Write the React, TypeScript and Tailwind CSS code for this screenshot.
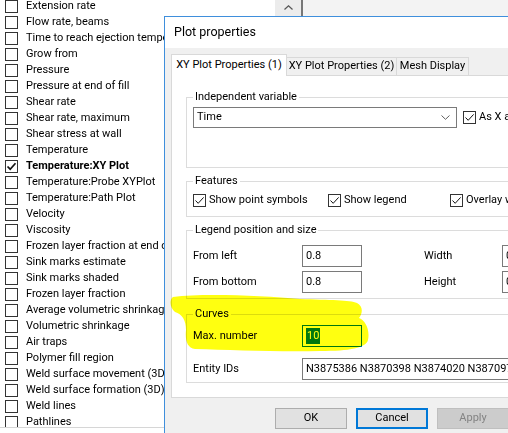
import React from "react";

const listItems = [
  "Extension rate",
  "Flow rate, beams",
  "Time to reach ejection temperature",
  "Grow from",
  "Pressure",
  "Pressure at end of fill",
  "Shear rate",
  "Shear rate, maximum",
  "Shear stress at wall",
  "Temperature",
  "Temperature:XY Plot",
  "Temperature:Probe XYPlot",
  "Temperature:Path Plot",
  "Velocity",
  "Viscosity",
  "Frozen layer fraction at end of fill",
  "Sink marks estimate",
  "Sink marks shaded",
  "Frozen layer fraction",
  "Average volumetric shrinkage",
  "Volumetric shrinkage",
  "Air traps",
  "Polymer fill region",
  "Weld surface movement (3D)",
  "Weld surface formation (3D)",
  "Weld lines",
  "Pathlines",
];

function CheckBox({ checked, bold }: { checked?: boolean; bold?: boolean }) {
  return (
    <span className="flex h-[13px] w-[13px] shrink-0 items-center justify-center border border-[#333333] bg-white">
      {checked && (
        <svg width="11" height="11" viewBox="0 0 11 11">
          <path
            d={bold ? "M1.5 5.5 L4.2 8.2 L9.5 2.2" : "M1.5 5.5 L4.2 8.3 L9.6 2.4"}
            fill="none"
            stroke="#111"
            strokeWidth={bold ? 1.7 : 1}
          />
        </svg>
      )}
    </span>
  );
}

function TextBox({ value, className = "" }: { value: string; className?: string }) {
  return (
    <div className={`flex h-[22px] items-center overflow-hidden whitespace-nowrap border border-[#7a7a7a] bg-white pl-[3px] ${className}`}>
      {value}
    </div>
  );
}

function Group({ label, className = "", children }: { label: string; className?: string; children: React.ReactNode }) {
  return (
    <fieldset className={`w-[340px] border border-[#dcdcdc] pl-[6px] ${className}`}>
      <legend className="px-[2px] leading-[14px]">{label}</legend>
      {children}
    </fieldset>
  );
}

export default function App() {
  return (
    <div className="relative h-[433px] w-[508px] overflow-hidden bg-white text-[11px] text-black [font-family:Roboto,'Liberation_Sans',sans-serif]">
      {/* background window: results list */}
      <div className="flex h-full">
        <div className="h-[428px] w-[275px] overflow-hidden border-b border-[#d6d6d6] pl-[5px]">
          <div className="-mt-[2px] w-[159px] overflow-hidden">
            {listItems.map((item) => {
              const on = item === "Temperature:XY Plot";
              return (
                <div key={item} className="flex h-[16px] items-center">
                  <CheckBox checked={on} bold />
                  <span className={`ml-[8px] whitespace-nowrap ${on ? "font-bold" : ""}`}>{item}</span>
                </div>
              );
            })}
          </div>
        </div>
        <div className="flex w-[26px] justify-center bg-[#ececec] pt-[5px]">
          <svg width="9" height="5" viewBox="0 0 9 5">
            <path d="M0.5 4.5 L4.5 0.8 L8.5 4.5" fill="none" stroke="#555" strokeWidth="1.2" />
          </svg>
        </div>
        <div className="w-[2px] bg-[#777777]" />
        <div className="flex-1 bg-[#f3f3f3]" />
      </div>

      {/* Plot properties dialog */}
      <div className="absolute left-[164px] top-[16px] h-[430px] w-[380px] border border-[#3f8fdc] bg-[#f0f0f0]">
        <div className="flex h-[31px] items-center bg-white pl-[9px] text-[12.5px]">Plot properties</div>
        <div className="px-[6px] pt-[6px]">
          <div className="flex h-[21px] items-end">
            <div className="relative z-10 -mb-[1px] flex h-[22px] w-[116px] items-center justify-center border border-b-0 border-[#d9d9d9] bg-white pb-[1px]">
              XY Plot Properties (1)
            </div>
            <div className="flex h-[18px] w-[110px] items-center justify-center border border-b-0 border-l-0 border-[#d9d9d9] bg-[#f0f0f0]">
              XY Plot Properties (2)
            </div>
            <div className="flex h-[18px] w-[72px] items-center justify-center border border-b-0 border-l-0 border-[#d9d9d9] bg-[#f0f0f0]">
              Mesh Display
            </div>
          </div>
          <div className="h-[323px] border border-[#d9d9d9] bg-white pl-[14px]">
            <Group label="Independent variable" className="mt-[14px] pb-[39px] pt-[3px]">
              <div className="flex items-center">
                <div className="flex h-[21px] w-[264px] items-center justify-between border border-[#7a7a7a] bg-white pl-[3px] pr-[6px]">
                  <span>Time</span>
                  <svg width="9" height="5" viewBox="0 0 9 5">
                    <path d="M0.5 0.5 L4.5 4.3 L8.5 0.5" fill="none" stroke="#606060" strokeWidth="1" />
                  </svg>
                </div>
                <div className="ml-[6px] flex items-center">
                  <CheckBox checked />
                  <span className="ml-[3px] whitespace-nowrap">As X axis</span>
                </div>
              </div>
            </Group>

            <Group label="Features" className="mt-[6px] pb-[8px] pt-[4px]">
              <div className="flex h-[16px] items-center">
                <div className="flex w-[135px] items-center">
                  <CheckBox checked />
                  <span className="ml-[3px] whitespace-nowrap">Show point symbols</span>
                </div>
                <div className="flex w-[122px] items-center">
                  <CheckBox checked />
                  <span className="ml-[3px] whitespace-nowrap">Show legend</span>
                </div>
                <div className="flex items-center">
                  <CheckBox checked />
                  <span className="ml-[3px] whitespace-nowrap">Overlay with existing</span>
                </div>
              </div>
            </Group>

            <Group label="Legend position and size" className="mt-[6px] pb-[5px] pt-[8px]">
              <div className="flex items-center">
                <span className="w-[109px]">From left</span>
                <TextBox value="0.8" className="w-[60px]" />
                <span className="ml-[62px] w-[78px]">Width</span>
                <TextBox value="0.5" className="w-[60px]" />
              </div>
              <div className="mt-[4px] flex items-center">
                <span className="w-[109px]">From bottom</span>
                <TextBox value="0.8" className="w-[60px]" />
                <span className="ml-[62px] w-[78px]">Height</span>
                <TextBox value="0.3" className="w-[60px]" />
              </div>
            </Group>

            <Group label="Curves" className="mt-[8px] pb-[2px] pt-[4px]">
              <div className="flex items-center">
                <span className="w-[109px]">Max. number</span>
                <div className="flex h-[22px] w-[60px] items-center border border-[#0078d7] bg-white pl-[3px]">
                  <span className="bg-[#0078d7] px-[1px] text-white">10</span>
                </div>
              </div>
              <div className="mt-[11px] flex items-center">
                <span className="w-[109px]">Entity IDs</span>
                <TextBox value="N3875386 N3870398 N3874020 N3870973 N3870811" className="w-[220px]" />
              </div>
            </Group>
          </div>
          <div className="mt-[10px] flex gap-[9px] pl-[104px]">
            <button className="h-[21px] w-[72px] border border-[#adadad] bg-[#e1e1e1]">OK</button>
            <button className="h-[21px] w-[72px] border-2 border-[#0078d7] bg-[#e1e1e1]">Cancel</button>
            <button className="h-[21px] w-[72px] border border-[#bfbfbf] bg-[#cccccc] text-[#838383]">Apply</button>
          </div>
        </div>
      </div>

      {/* highlighter mark */}
      <svg className="pointer-events-none absolute left-0 top-0 mix-blend-multiply" width="508" height="433" viewBox="0 0 508 433">
        <path
          d="M173 297 C 205 293 265 296 300 299 C 330 300 350 300 357 303 C 363 306 363 313 359 318 C 366 321 370 330 368 340 C 366 348 350 351 320 351 C 280 352 230 350 195 349 C 187 348 185 340 186 330 C 186 320 182 314 175 312 C 170 308 169 300 173 297 Z"
          fill="#ffff10"
        />
      </svg>
    </div>
  );
}
